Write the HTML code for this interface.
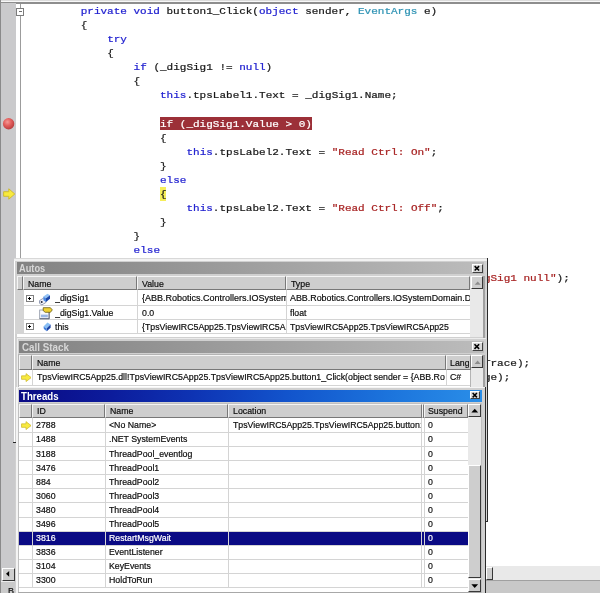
<!DOCTYPE html>
<html>
<head>
<meta charset="utf-8">
<title>Debugger</title>
<style>
html,body{margin:0;padding:0;}
body{width:600px;height:593px;overflow:hidden;background:#fff;position:relative;font-family:"Liberation Sans",sans-serif;}
#root{position:absolute;left:0;top:0;width:600px;height:593px;will-change:transform;}
.abs{position:absolute;}
#code{position:absolute;left:0;top:0;width:600px;height:593px;font-family:"Liberation Mono",monospace;font-size:11.017px;color:#181818;-webkit-text-stroke:0.25px;}
#code .ln{position:absolute;height:14px;line-height:14px;white-space:pre;transform:scaleY(0.9);transform-origin:0 9.9px;}
.k{color:#2222d0;}
.t{color:#2f93b4;}
.s{color:#a82424;}
.bpt{color:#fff;}
.title{position:absolute;font-weight:bold;white-space:pre;overflow:hidden;}
.title span{position:absolute;display:inline-block;transform-origin:0 50%;transform:scaleX(0.95);line-height:normal;}
.inact{background:linear-gradient(90deg,#828282,#bcbcbc);color:#d8d8d8;}
.act{background:linear-gradient(90deg,#0a0a84 0%,#0c1c9c 20%,#0e34b4 38%,#1254cc 58%,#1c74dc 80%,#2a8ee8 100%);color:#fff;}
.close{position:absolute;background:#d8d8d8;border-top:1px solid #fff;border-left:1px solid #fff;border-right:1px solid #404040;border-bottom:1px solid #404040;box-sizing:border-box;}
.hdr{position:absolute;background:#cecece;box-sizing:border-box;border-right:1px solid #787878;border-bottom:1px solid #787878;border-top:1px solid #f4f4f4;border-left:1px solid #f4f4f4;overflow:hidden;}
.cell{position:absolute;overflow:hidden;white-space:pre;font-size:10px;line-height:14px;height:14px;color:#0c0c0c;-webkit-text-stroke:0.2px;}
.cell span{display:inline-block;transform-origin:0 50%;}
.track{position:absolute;background:#e9e9e9;}
.thumb,.sbb{position:absolute;background:#cecece;box-sizing:border-box;border-top:1px solid #fff;border-left:1px solid #fff;border-right:1.3px solid #383838;border-bottom:1.3px solid #383838;}
.plus{position:absolute;width:7.4px;height:7.4px;border:1px solid #808080;background:#fff;box-sizing:border-box;}
.plus i{position:absolute;left:1.2px;top:2.2px;width:3px;height:1px;background:#000;}
.plus b{position:absolute;left:2.2px;top:1.2px;width:1px;height:3px;background:#000;}
</style>
</head>
<body>
<div id="root">
<div id="code">
<div class="abs" style="left:159.7px;top:187px;width:6.6px;height:14px;background:#f6ee5a"></div>
<div class="abs" style="left:160px;top:116.8px;width:152px;height:13.6px;background:#9c3038"></div>
<div class="ln" style="top:4.07px;left:80.70px"><span class="k">private</span> <span class="k">void</span> button1_Click(<span class="k">object</span> sender, <span class="t">EventArgs</span> e)</div>
<div class="ln" style="top:18.13px;left:80.70px">{</div>
<div class="ln" style="top:32.19px;left:107.14px"><span class="k">try</span></div>
<div class="ln" style="top:46.25px;left:107.14px">{</div>
<div class="ln" style="top:60.31px;left:133.58px"><span class="k">if</span> (_digSig1 != <span class="k">null</span>)</div>
<div class="ln" style="top:74.37px;left:133.58px">{</div>
<div class="ln" style="top:88.43px;left:160.02px"><span class="k">this</span>.tpsLabel1.Text = _digSig1.Name;</div>
<div class="ln" style="top:116.55px;left:160.02px"><span class="bpt">if (_digSig1.Value &gt; 0)</span></div>
<div class="ln" style="top:130.61px;left:160.02px">{</div>
<div class="ln" style="top:144.67px;left:186.46px"><span class="k">this</span>.tpsLabel2.Text = <span class="s">"Read Ctrl: On"</span>;</div>
<div class="ln" style="top:158.73px;left:160.02px">}</div>
<div class="ln" style="top:172.79px;left:160.02px"><span class="k">else</span></div>
<div class="ln" style="top:186.85px;left:160.02px">{</div>
<div class="ln" style="top:200.91px;left:186.46px"><span class="k">this</span>.tpsLabel2.Text = <span class="s">"Read Ctrl: Off"</span>;</div>
<div class="ln" style="top:214.97px;left:160.02px">}</div>
<div class="ln" style="top:229.03px;left:133.58px">}</div>
<div class="ln" style="top:243.09px;left:133.58px"><span class="k">else</span></div>
<div class="ln" style="top:271.21px;left:483.91px"><span class="s">gSig1 null"</span>);</div>
<div class="ln" style="top:355.57px;left:483.91px">Trace);</div>
<div class="ln" style="top:369.63px;left:483.91px">ge);</div>
</div>
<div class="abs" style="left:0.00px;top:0.00px;width:600.00px;height:1.10px;background:#dcdcdc"></div>
<div class="abs" style="left:0.00px;top:1.10px;width:600.00px;height:1.30px;background:#f8f8f8"></div>
<div class="abs" style="left:0.00px;top:2.40px;width:600.00px;height:1.20px;background:#8e8e8e"></div>
<div class="abs" style="left:1.00px;top:3.00px;width:14.80px;height:597.00px;background:#cacacc"></div>
<div class="abs" style="left:0.00px;top:0.00px;width:1.00px;height:600.00px;background:#8a8a8a"></div>
<div class="abs" style="left:20.00px;top:3.60px;width:1.00px;height:255.40px;background:#9c9c9c"></div>
<div class="abs" style="left:16.30px;top:8.00px;width:7.70px;height:7.80px;background:#fff;border:1px solid #7c7c7c;box-sizing:border-box"><div class="abs" style="left:1.4px;top:2.4px;width:3px;height:1px;background:#707070"></div></div>
<svg class="abs" style="left:2px;top:117px" width="14" height="14" viewBox="0 0 14 14"><defs><radialGradient id="bpg" cx="0.4" cy="0.35" r="0.7"><stop offset="0" stop-color="#f49a96"/><stop offset="0.45" stop-color="#e4605e"/><stop offset="1" stop-color="#b43a3c"/></radialGradient></defs><circle cx="6.6" cy="6.7" r="5.7" fill="url(#bpg)"/></svg>
<svg class="abs" width="12.40" height="12.00" viewBox="0 0 12 12" preserveAspectRatio="none" style="left:2.60px;top:187.80px"><path d="M0.6 3.7 H5.6 V0.8 L11.4 6 L5.6 11.2 V8.3 H0.6 Z" fill="#f8ea3e" stroke="#cdb92c" stroke-width="0.9" stroke-linejoin="round"/></svg>
<div class="abs" style="left:1.00px;top:580.80px;width:14.80px;height:1.20px;background:#ececec"></div>
<div class="abs" style="left:1.00px;top:582.00px;width:14.80px;height:18.00px;background:#cacaca"></div>
<div class="cell" style="left:8.00px;top:584.26px;font-size:9.5px;"><span style="transform:scaleX(0.947368)">B</span></div>
<div class="abs" style="left:14.40px;top:591.00px;width:1.20px;height:2.00px;background:#555"></div>
<div class="track" style="left:485.90px;top:566.40px;width:114.10px;height:14.00px;"></div>
<div class="sbb" style="left:485.90px;top:567.30px;width:6.90px;height:12.70px;"></div>
<div class="abs" style="left:485.90px;top:580.40px;width:114.10px;height:19.60px;background:#c8c8c8"></div>
<div class="abs" style="left:485.90px;top:580.20px;width:114.10px;height:1.10px;background:#a0a0a0"></div>
<div class="abs" style="left:14.00px;top:258.20px;width:472.00px;height:341.80px;background:#d0d0d0"></div>
<div class="abs" style="left:486.00px;top:258.20px;width:2.10px;height:263.60px;background:#d6d6d6"></div>
<div class="abs" style="left:14.00px;top:258.20px;width:473.00px;height:1.20px;background:#d8d8d8"></div>
<div class="abs" style="left:14.00px;top:259.40px;width:1.10px;height:182.20px;background:#fff"></div>
<div class="abs" style="left:14.00px;top:441.60px;width:1.10px;height:158.40px;background:#cacacc"></div>
<div class="abs" style="left:13.00px;top:442.00px;width:2.80px;height:1.40px;background:#282828"></div>
<div class="abs" style="left:14.00px;top:259.40px;width:473.00px;height:1.30px;background:#f2f2f2"></div>
<div class="abs" style="left:487.10px;top:258.20px;width:1.10px;height:263.60px;background:#2a2a2a"></div>
<div class="abs" style="left:485.90px;top:520.90px;width:2.30px;height:1.00px;background:#2a2a2a"></div>
<div class="title inact" style="left:17.00px;top:261.60px;width:467.00px;height:12.50px;"><span style="left:1.60px;top:1.85px;font-size:10px;transform:scaleX(0.924)">Autos</span></div>
<div class="close" style="left:472.40px;top:264.00px;width:10.60px;height:8.60px;"><svg width="10.60" height="8.60" viewBox="0 0 10 8.5" style="position:absolute;left:0;top:0"><path d="M1.4 1.1 L5.8 5.5 M5.8 1.1 L1.4 5.5" stroke="#000" stroke-width="1.5" fill="none"/></svg></div>
<div class="hdr" style="left:17.00px;top:276.10px;width:6.30px;height:14.10px;"></div>
<div class="hdr" style="left:23.30px;top:276.10px;width:113.70px;height:14.10px;"></div><div class="cell" style="left:27.70px;top:276.86px;width:107.80px;font-size:9.5px;"><span style="transform:scaleX(0.923158)">Name</span></div>
<div class="hdr" style="left:137.00px;top:276.10px;width:149.30px;height:14.10px;"></div><div class="cell" style="left:141.50px;top:276.86px;width:143.30px;font-size:9.5px;"><span style="transform:scaleX(0.923158)">Value</span></div>
<div class="hdr" style="left:286.30px;top:276.10px;width:184.10px;height:14.10px;"></div><div class="cell" style="left:290.60px;top:276.86px;width:178.30px;font-size:9.5px;"><span style="transform:scaleX(0.923158)">Type</span></div>
<div class="abs" style="left:17.00px;top:290.20px;width:453.30px;height:47.10px;background:#fff"></div>
<div class="abs" style="left:15.10px;top:290.20px;width:8.70px;height:44.10px;background:#d4d4d4"></div>
<div class="cell" style="left:55.30px;top:291.36px;width:80.70px;font-size:9.5px;"><span style="transform:scaleX(0.923158)">_digSig1</span></div>
<div class="cell" style="left:141.60px;top:291.36px;width:144.40px;font-size:9.5px;"><span style="transform:scaleX(0.947368)">{ABB.Robotics.Controllers.IOSystemDomain.DigitalSignal}</span></div>
<div class="cell" style="left:290.00px;top:291.36px;width:179.50px;font-size:9.5px;"><span style="transform:scaleX(0.934737)">ABB.Robotics.Controllers.IOSystemDomain.DigitalSignal</span></div>
<div class="abs" style="left:23.80px;top:304.60px;width:446.50px;height:1.00px;background:#d4d4d4"></div>
<div class="plus" style="left:26.3px;top:294.60px"><i></i><b></b></div>
<div class="cell" style="left:55.30px;top:305.66px;width:80.70px;font-size:9.5px;"><span style="transform:scaleX(0.923158)">_digSig1.Value</span></div>
<div class="cell" style="left:141.60px;top:305.66px;width:144.40px;font-size:9.5px;"><span style="transform:scaleX(0.923158)">0.0</span></div>
<div class="cell" style="left:290.00px;top:305.66px;width:179.50px;font-size:9.5px;"><span style="transform:scaleX(0.915789)">float</span></div>
<div class="abs" style="left:23.80px;top:318.70px;width:446.50px;height:1.00px;background:#d4d4d4"></div>
<div class="cell" style="left:55.30px;top:319.76px;width:80.70px;font-size:9.5px;"><span style="transform:scaleX(0.923158)">this</span></div>
<div class="cell" style="left:141.60px;top:319.76px;width:144.40px;font-size:9.5px;"><span style="transform:scaleX(0.923158)">{TpsViewIRC5App25.TpsViewIRC5App25}</span></div>
<div class="cell" style="left:290.00px;top:319.76px;width:179.50px;font-size:9.5px;"><span style="transform:scaleX(0.915789)">TpsViewIRC5App25.TpsViewIRC5App25</span></div>
<div class="abs" style="left:23.80px;top:332.90px;width:446.50px;height:1.00px;background:#d4d4d4"></div>
<div class="plus" style="left:26.3px;top:323.00px"><i></i><b></b></div>
<div class="abs" style="left:137.10px;top:290.20px;width:1.00px;height:43.20px;background:#d4d4d4"></div>
<div class="abs" style="left:286.30px;top:290.20px;width:1.00px;height:43.20px;background:#d4d4d4"></div>
<svg class="abs" style="left:39px;top:293px" width="12" height="13" viewBox="0 0 12 13"><polygon points="0.5,7.6 4.4,5.2 6.8,6.8 6.8,9.6 2.9,11.9 0.5,10.3" fill="#f0f1f8" stroke="#7c86a4" stroke-width="0.8"/><circle cx="2.7" cy="9.1" r="1" fill="#20243a"/><polygon points="4.4,3.5 8.5,0.7 11,2.2 7,5.2" fill="#92c2f4"/><polygon points="7,5.2 11,2.2 11,5.8 7,8.9" fill="#1a46a8"/><polygon points="4.4,3.5 7,5.2 7,8.9 4.4,7.2" fill="#4a88e0"/></svg>
<svg class="abs" style="left:38.5px;top:306.5px" width="14" height="13" viewBox="0 0 14 13"><rect x="0.7" y="3" width="9.3" height="8.6" fill="#fafafc" stroke="#8a92a4" stroke-width="0.8"/><rect x="1.9" y="7.6" width="6.9" height="2.7" fill="#9ab6e4"/><path d="M0.7 11.8 H10.2 V4" stroke="#5a6274" stroke-width="0.9" fill="none"/><path d="M4.2 0.7 H11.4 L13.3 2.9 L11.4 5.3 H6.2 L4.2 3.6 Z" fill="#f0d232" stroke="#6a5c12" stroke-width="0.8"/></svg>
<svg class="abs" style="left:42.5px;top:321.5px" width="9" height="10" viewBox="0 0 9 10"><polygon points="0.5,4.6 4.5,0.5 7.6,2.6 3.5,6.6" fill="#88bef4"/><polygon points="3.5,6.6 7.6,2.6 7.6,5.7 3.8,9.3" fill="#1840a4"/><polygon points="0.5,4.6 3.5,6.6 3.8,9.3 0.9,7" fill="#3c7cdc"/></svg>
<div class="track" style="left:470.30px;top:276.10px;width:13.30px;height:61.20px;"></div>
<div class="sbb" style="left:470.90px;top:276.40px;width:12.60px;height:13.10px;"><svg width="12.60" height="13.10" style="position:absolute;left:0;top:0"><polygon points="2.70,7.85 8.70,7.85 5.70,4.45" fill="#8c8c8c"/></svg></div>
<div class="abs" style="left:483.40px;top:276.10px;width:1.20px;height:61.50px;background:#a0a0a0"></div>
<div class="abs" style="left:16.60px;top:338.30px;width:469.70px;height:1.10px;background:#ececec"></div>
<div class="abs" style="left:16.60px;top:338.30px;width:1.20px;height:49.70px;background:#ececec"></div>
<div class="abs" style="left:18.10px;top:354.00px;width:452.90px;height:33.20px;background:#b4b4b4"></div>
<div class="title inact" style="left:19.10px;top:341.20px;width:464.90px;height:11.60px;"><span style="left:2.50px;top:0.85px;font-size:10px;transform:scaleX(0.98)">Call Stack</span></div>
<div class="close" style="left:472.20px;top:342.30px;width:10.60px;height:9.10px;"><svg width="10.60" height="9.10" viewBox="0 0 10 8.5" style="position:absolute;left:0;top:0"><path d="M1.4 1.1 L5.8 5.5 M5.8 1.1 L1.4 5.5" stroke="#000" stroke-width="1.5" fill="none"/></svg></div>
<div class="abs" style="left:19.10px;top:355.00px;width:451.40px;height:31.90px;background:#fff"></div>
<div class="hdr" style="left:19.10px;top:355.00px;width:13.00px;height:14.70px;"></div>
<div class="hdr" style="left:32.10px;top:355.00px;width:413.90px;height:14.70px;"></div><div class="cell" style="left:37.00px;top:355.86px;width:407.50px;font-size:9.5px;"><span style="transform:scaleX(0.923158)">Name</span></div>
<div class="hdr" style="left:446.00px;top:355.00px;width:24.50px;height:14.70px;"></div><div class="cell" style="left:450.00px;top:355.86px;width:19.00px;font-size:9.5px;"><span style="transform:scaleX(0.923158)">Lang</span></div>
<svg class="abs" width="10.80" height="9.20" viewBox="0 0 12 12" preserveAspectRatio="none" style="left:20.60px;top:372.80px"><path d="M0.6 3.7 H5.6 V0.8 L11.4 6 L5.6 11.2 V8.3 H0.6 Z" fill="#f8ea3e" stroke="#cdb92c" stroke-width="0.9" stroke-linejoin="round"/></svg>
<div class="cell" style="left:36.60px;top:370.46px;width:408.90px;font-size:9.5px;"><span style="transform:scaleX(0.923158)">TpsViewIRC5App25.dll!TpsViewIRC5App25.TpsViewIRC5App25.button1_Click(object sender = {ABB.Robotics.Controllers.IOSystemDomain.DigitalSignal}</span></div>
<div class="cell" style="left:449.60px;top:370.46px;width:20.00px;font-size:9.5px;"><span style="transform:scaleX(0.923158)">C#</span></div>
<div class="abs" style="left:32.20px;top:369.70px;width:1.00px;height:15.40px;background:#d4d4d4"></div>
<div class="abs" style="left:446.10px;top:369.70px;width:1.00px;height:15.40px;background:#d4d4d4"></div>
<div class="abs" style="left:19.10px;top:384.60px;width:451.40px;height:1.00px;background:#d4d4d4"></div>
<div class="track" style="left:470.50px;top:355.00px;width:13.10px;height:31.90px;"></div>
<div class="sbb" style="left:471.10px;top:355.00px;width:12.40px;height:13.40px;"><svg width="12.40" height="13.40" style="position:absolute;left:0;top:0"><polygon points="2.60,8.00 8.60,8.00 5.60,4.60" fill="#8c8c8c"/></svg></div>
<div class="abs" style="left:483.40px;top:355.00px;width:1.20px;height:32.20px;background:#a0a0a0"></div>
<div class="abs" style="left:16.40px;top:387.20px;width:468.60px;height:1.20px;background:#f4f4f4"></div>
<div class="abs" style="left:16.40px;top:387.20px;width:1.40px;height:212.80px;background:#f4f4f4"></div>
<div class="abs" style="left:484.70px;top:387.20px;width:1.10px;height:212.80px;background:#2a2a2a"></div>
<div class="abs" style="left:18.30px;top:403.30px;width:463.30px;height:196.70px;background:#c0c0c0"></div>
<div class="title act" style="left:19.10px;top:389.50px;width:463.30px;height:12.80px;"><span style="left:2.20px;top:1.15px;font-size:10px;transform:scaleX(0.964)">Threads</span></div>
<div class="close" style="left:470.10px;top:391.10px;width:10.30px;height:8.30px;"><svg width="10.30" height="8.30" viewBox="0 0 10 8.5" style="position:absolute;left:0;top:0"><path d="M1.4 1.1 L5.8 5.5 M5.8 1.1 L1.4 5.5" stroke="#000" stroke-width="1.5" fill="none"/></svg></div>
<div class="abs" style="left:19.10px;top:417.90px;width:448.50px;height:182.10px;background:#fff"></div>
<div class="hdr" style="left:19.10px;top:404.00px;width:12.80px;height:13.90px;"></div>
<div class="hdr" style="left:31.90px;top:404.00px;width:73.10px;height:13.90px;"></div><div class="cell" style="left:36.80px;top:403.96px;width:66.70px;font-size:9.5px;"><span style="transform:scaleX(0.923158)">ID</span></div>
<div class="hdr" style="left:105.00px;top:404.00px;width:123.00px;height:13.90px;"></div><div class="cell" style="left:109.80px;top:403.96px;width:116.70px;font-size:9.5px;"><span style="transform:scaleX(0.923158)">Name</span></div>
<div class="hdr" style="left:228.00px;top:404.00px;width:193.50px;height:13.90px;"></div><div class="cell" style="left:232.80px;top:403.96px;width:187.20px;font-size:9.5px;"><span style="transform:scaleX(0.923158)">Location</span></div>
<div class="hdr" style="left:421.50px;top:404.00px;width:2.30px;height:13.90px;"></div>
<div class="hdr" style="left:423.80px;top:404.00px;width:44.00px;height:13.90px;"></div><div class="cell" style="left:428.00px;top:403.96px;width:38.30px;font-size:9.5px;"><span style="transform:scaleX(0.923158)">Suspend</span></div>
<div class="cell" style="left:35.60px;top:418.46px;width:68.40px;font-size:9.5px;"><span style="transform:scaleX(0.923158)">2788</span></div>
<div class="cell" style="left:109.30px;top:418.46px;width:118.20px;font-size:9.5px;"><span style="transform:scaleX(0.923158)">&lt;No Name&gt;</span></div>
<div class="cell" style="left:233.00px;top:418.46px;width:187.80px;font-size:9.5px;"><span style="transform:scaleX(0.923158)">TpsViewIRC5App25.TpsViewIRC5App25.button1_Click</span></div>
<div class="cell" style="left:428.00px;top:418.46px;width:30.00px;font-size:9.5px;"><span style="transform:scaleX(0.923158)">0</span></div>
<div class="abs" style="left:19.10px;top:431.95px;width:448.50px;height:1.00px;background:#d4d4d4"></div>
<div class="cell" style="left:35.60px;top:432.49px;width:68.40px;font-size:9.5px;"><span style="transform:scaleX(0.923158)">1488</span></div>
<div class="cell" style="left:109.30px;top:432.49px;width:118.20px;font-size:9.5px;"><span style="transform:scaleX(0.923158)">.NET SystemEvents</span></div>
<div class="cell" style="left:428.00px;top:432.49px;width:30.00px;font-size:9.5px;"><span style="transform:scaleX(0.923158)">0</span></div>
<div class="abs" style="left:19.10px;top:446.05px;width:448.50px;height:1.00px;background:#d4d4d4"></div>
<div class="cell" style="left:35.60px;top:446.52px;width:68.40px;font-size:9.5px;"><span style="transform:scaleX(0.923158)">3188</span></div>
<div class="cell" style="left:109.30px;top:446.52px;width:118.20px;font-size:9.5px;"><span style="transform:scaleX(0.923158)">ThreadPool_eventlog</span></div>
<div class="cell" style="left:428.00px;top:446.52px;width:30.00px;font-size:9.5px;"><span style="transform:scaleX(0.923158)">0</span></div>
<div class="abs" style="left:19.10px;top:460.15px;width:448.50px;height:1.00px;background:#d4d4d4"></div>
<div class="cell" style="left:35.60px;top:460.55px;width:68.40px;font-size:9.5px;"><span style="transform:scaleX(0.923158)">3476</span></div>
<div class="cell" style="left:109.30px;top:460.55px;width:118.20px;font-size:9.5px;"><span style="transform:scaleX(0.923158)">ThreadPool1</span></div>
<div class="cell" style="left:428.00px;top:460.55px;width:30.00px;font-size:9.5px;"><span style="transform:scaleX(0.923158)">0</span></div>
<div class="abs" style="left:19.10px;top:474.25px;width:448.50px;height:1.00px;background:#d4d4d4"></div>
<div class="cell" style="left:35.60px;top:474.58px;width:68.40px;font-size:9.5px;"><span style="transform:scaleX(0.923158)">884</span></div>
<div class="cell" style="left:109.30px;top:474.58px;width:118.20px;font-size:9.5px;"><span style="transform:scaleX(0.923158)">ThreadPool2</span></div>
<div class="cell" style="left:428.00px;top:474.58px;width:30.00px;font-size:9.5px;"><span style="transform:scaleX(0.923158)">0</span></div>
<div class="abs" style="left:19.10px;top:488.35px;width:448.50px;height:1.00px;background:#d4d4d4"></div>
<div class="cell" style="left:35.60px;top:488.61px;width:68.40px;font-size:9.5px;"><span style="transform:scaleX(0.923158)">3060</span></div>
<div class="cell" style="left:109.30px;top:488.61px;width:118.20px;font-size:9.5px;"><span style="transform:scaleX(0.923158)">ThreadPool3</span></div>
<div class="cell" style="left:428.00px;top:488.61px;width:30.00px;font-size:9.5px;"><span style="transform:scaleX(0.923158)">0</span></div>
<div class="abs" style="left:19.10px;top:502.45px;width:448.50px;height:1.00px;background:#d4d4d4"></div>
<div class="cell" style="left:35.60px;top:502.64px;width:68.40px;font-size:9.5px;"><span style="transform:scaleX(0.923158)">3480</span></div>
<div class="cell" style="left:109.30px;top:502.64px;width:118.20px;font-size:9.5px;"><span style="transform:scaleX(0.923158)">ThreadPool4</span></div>
<div class="cell" style="left:428.00px;top:502.64px;width:30.00px;font-size:9.5px;"><span style="transform:scaleX(0.923158)">0</span></div>
<div class="abs" style="left:19.10px;top:516.55px;width:448.50px;height:1.00px;background:#d4d4d4"></div>
<div class="cell" style="left:35.60px;top:516.67px;width:68.40px;font-size:9.5px;"><span style="transform:scaleX(0.923158)">3496</span></div>
<div class="cell" style="left:109.30px;top:516.67px;width:118.20px;font-size:9.5px;"><span style="transform:scaleX(0.923158)">ThreadPool5</span></div>
<div class="cell" style="left:428.00px;top:516.67px;width:30.00px;font-size:9.5px;"><span style="transform:scaleX(0.923158)">0</span></div>
<div class="abs" style="left:19.10px;top:530.65px;width:448.50px;height:1.00px;background:#d4d4d4"></div>
<div class="abs" style="left:19.10px;top:531.75px;width:448.50px;height:13.10px;background:#0a0a84"></div>
<div class="cell" style="left:35.60px;top:530.70px;width:68.40px;color:#fff;font-size:9.5px;"><span style="transform:scaleX(0.923158)">3816</span></div>
<div class="cell" style="left:109.30px;top:530.70px;width:118.20px;color:#fff;font-size:9.5px;"><span style="transform:scaleX(0.923158)">RestartMsgWait</span></div>
<div class="cell" style="left:428.00px;top:530.70px;width:30.00px;color:#fff;font-size:9.5px;"><span style="transform:scaleX(0.923158)">0</span></div>
<div class="abs" style="left:19.10px;top:544.75px;width:448.50px;height:1.00px;background:#d4d4d4"></div>
<div class="cell" style="left:35.60px;top:544.73px;width:68.40px;font-size:9.5px;"><span style="transform:scaleX(0.923158)">3836</span></div>
<div class="cell" style="left:109.30px;top:544.73px;width:118.20px;font-size:9.5px;"><span style="transform:scaleX(0.923158)">EventListener</span></div>
<div class="cell" style="left:428.00px;top:544.73px;width:30.00px;font-size:9.5px;"><span style="transform:scaleX(0.923158)">0</span></div>
<div class="abs" style="left:19.10px;top:558.85px;width:448.50px;height:1.00px;background:#d4d4d4"></div>
<div class="cell" style="left:35.60px;top:558.76px;width:68.40px;font-size:9.5px;"><span style="transform:scaleX(0.923158)">3104</span></div>
<div class="cell" style="left:109.30px;top:558.76px;width:118.20px;font-size:9.5px;"><span style="transform:scaleX(0.923158)">KeyEvents</span></div>
<div class="cell" style="left:428.00px;top:558.76px;width:30.00px;font-size:9.5px;"><span style="transform:scaleX(0.923158)">0</span></div>
<div class="abs" style="left:19.10px;top:572.95px;width:448.50px;height:1.00px;background:#d4d4d4"></div>
<div class="cell" style="left:35.60px;top:572.79px;width:68.40px;font-size:9.5px;"><span style="transform:scaleX(0.923158)">3300</span></div>
<div class="cell" style="left:109.30px;top:572.79px;width:118.20px;font-size:9.5px;"><span style="transform:scaleX(0.923158)">HoldToRun</span></div>
<div class="cell" style="left:428.00px;top:572.79px;width:30.00px;font-size:9.5px;"><span style="transform:scaleX(0.923158)">0</span></div>
<div class="abs" style="left:19.10px;top:587.05px;width:448.50px;height:1.00px;background:#d4d4d4"></div>
<div class="abs" style="left:31.90px;top:417.90px;width:1.00px;height:170.00px;background:#d4d4d4"></div>
<div class="abs" style="left:105.00px;top:417.90px;width:1.00px;height:170.00px;background:#d4d4d4"></div>
<div class="abs" style="left:228.10px;top:417.90px;width:1.00px;height:170.00px;background:#d4d4d4"></div>
<div class="abs" style="left:421.10px;top:417.90px;width:1.00px;height:170.00px;background:#d4d4d4"></div>
<div class="abs" style="left:423.70px;top:417.90px;width:1.00px;height:170.00px;background:#d4d4d4"></div>
<svg class="abs" width="10.70" height="9.20" viewBox="0 0 12 12" preserveAspectRatio="none" style="left:20.80px;top:420.50px"><path d="M0.6 3.7 H5.6 V0.8 L11.4 6 L5.6 11.2 V8.3 H0.6 Z" fill="#f8ea3e" stroke="#cdb92c" stroke-width="0.9" stroke-linejoin="round"/></svg>
<div class="track" style="left:467.60px;top:404.00px;width:13.50px;height:196.00px;"></div>
<div class="sbb" style="left:468.10px;top:404.00px;width:12.70px;height:12.60px;"><svg width="12.70" height="12.60" style="position:absolute;left:0;top:0"><polygon points="2.35,7.60 9.15,7.60 5.75,3.80" fill="#000"/></svg></div>
<div class="sbb" style="left:468.10px;top:579.20px;width:12.70px;height:13.00px;"><svg width="12.70" height="13.00" style="position:absolute;left:0;top:0"><polygon points="2.35,4.30 9.15,4.30 5.75,8.10" fill="#000"/></svg></div>
<div class="thumb" style="left:468.10px;top:465.30px;width:12.80px;height:113.10px;"></div>
<div class="abs" style="left:18.30px;top:592.20px;width:462.90px;height:0.80px;background:#a8a8a8"></div>
<div class="sbb" style="left:2.00px;top:567.80px;width:12.90px;height:13.00px;"><svg width="12" height="13" style="position:absolute;left:0;top:0"><polygon points="6.2,1.9 6.2,7.7 3,4.8" fill="#000"/></svg></div>
</div>
</body>
</html>
